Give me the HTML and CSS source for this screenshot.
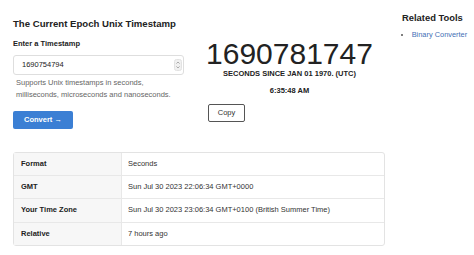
FILE: index.html
```html
<!DOCTYPE html>
<html>
<head>
    <title>Epoch Unix Timestamp</title>
    <link rel="stylesheet" href="styles.css">
</head>
<body>
    <div class="page">
        <div class="main">
            <div class="top">
                <div class="form">
                    <h1 class="title">The Current Epoch Unix Timestamp</h1>
                    <label class="label" for="ts">Enter a Timestamp</label>
                    <div class="field">
                        <input id="ts" class="field-input" type="text" value="1690754794">
                        <svg class="spinner" width="8" height="12" viewBox="0 0 8 12">
                            <rect x="0.5" y="0.5" width="7" height="11" rx="2" fill="#f0f0f0" stroke="#e2e2e2"/>
                            <path d="M2.4 4.6 L4 3 L5.6 4.6" fill="none" stroke="#999" stroke-width="0.8"/>
                            <path d="M2.4 7.4 L4 9 L5.6 7.4" fill="none" stroke="#999" stroke-width="0.8"/>
                        </svg>
                    </div>
                    <p class="help">Supports Unix timestamps in seconds,<br>milliseconds, microseconds and nanoseconds.</p>
                    <button class="btn-convert">Convert &rarr;</button>
                </div>
                <div class="display">
                    <div class="epoch">1690781747</div>
                    <div class="caption">SECONDS SINCE JAN 01 1970. (UTC)</div>
                    <div class="clock">6:35:48 AM</div>
                    <button class="btn-copy">Copy</button>
                </div>
            </div>
            <table class="results">
                <tr>
                    <td class="key">Format</td>
                    <td>Seconds</td>
                </tr>
                <tr>
                    <td class="key">GMT</td>
                    <td>Sun Jul 30 2023 22:06:34 GMT+0000</td>
                </tr>
                <tr>
                    <td class="key">Your Time Zone</td>
                    <td>Sun Jul 30 2023 23:06:34 GMT+0100 (British Summer Time)</td>
                </tr>
                <tr>
                    <td class="key">Relative</td>
                    <td>7 hours ago</td>
                </tr>
            </table>
        </div>
        <aside class="sidebar">
            <h2 class="sidebar-title">Related Tools</h2>
            <ul class="tools">
                <li><a href="#">Binary Converter</a></li>
            </ul>
        </aside>
    </div>
</body>
</html>
```

FILE: styles.css
```css
body {
    margin: 0;
    font-family: "Liberation Sans", Arial, sans-serif;
    color: #222;
}

.page {
    display: flex;
    padding-left: 13px;
}

.main {
    width: 372px;
}

.top {
    display: flex;
}

.form {
    width: 171px;
    padding-top: 18px;
}

.title {
    margin: 0;
    font-size: 9.6px;
    line-height: 12px;
    white-space: nowrap;
}

.label {
    display: block;
    margin-top: 8.5px;
    font-size: 7.5px;
    line-height: 10px;
    font-weight: bold;
}

.field {
    display: flex;
    align-items: center;
    height: 20px;
    box-sizing: border-box;
    margin-top: 6px;
    padding: 0 1px 0 8px;
    border: 1px solid #dedede;
    border-radius: 3px;
}

.field-input {
    flex: 1;
    min-width: 0;
    padding: 0;
    border: none;
    outline: none;
    background: transparent;
    font-family: "Liberation Sans", Arial, sans-serif;
    font-size: 7.5px;
    color: #222;
}

.help {
    margin: 2px 0 0;
    padding-left: 3px;
    font-size: 7.5px;
    line-height: 12.5px;
    color: #666;
    white-space: nowrap;
}

.btn-convert {
    display: block;
    margin-top: 9px;
    width: 60px;
    height: 18px;
    padding: 0;
    border: none;
    border-radius: 2px;
    background-color: #3b7fd4;
    color: white;
    font-family: "Liberation Sans", Arial, sans-serif;
    font-size: 7.5px;
    font-weight: bold;
}

.display {
    width: 167px;
    margin-left: 22px;
    padding-top: 39px;
    text-align: center;
}

.epoch {
    font-size: 30px;
    line-height: 30px;
}

.caption {
    font-size: 7.5px;
    line-height: 10px;
    font-weight: bold;
    white-space: nowrap;
}

.clock {
    margin-top: 6.5px;
    font-size: 7.5px;
    line-height: 10px;
    font-weight: bold;
}

.btn-copy {
    display: block;
    margin: 8px 0 0 2px;
    width: 37px;
    height: 18px;
    padding: 0;
    border: 1px solid #555;
    border-radius: 2px;
    background: white;
    color: #333;
    font-family: "Liberation Sans", Arial, sans-serif;
    font-size: 7.5px;
}

.results {
    width: 372px;
    margin-top: 23px;
    table-layout: fixed;
    border-collapse: separate;
    border-spacing: 0;
    border: 1px solid #e3e3e3;
    border-radius: 3px;
    font-size: 7.5px;
    color: #333;
}

.results td {
    padding: 7px 6px;
    line-height: 8.4px;
    border-bottom: 1px solid #e8e8e8;
    white-space: nowrap;
}

.results tr:last-child td {
    border-bottom: none;
}

.results .key {
    width: 93px;
    padding-left: 7px;
    padding-right: 7px;
    background-color: #f7f7f7;
    border-right: 1px solid #e8e8e8;
    font-weight: bold;
    color: #222;
}

.sidebar {
    margin-left: 17px;
    padding-top: 11.5px;
}

.sidebar-title {
    margin: 0;
    font-size: 9.4px;
    line-height: 12px;
    white-space: nowrap;
}

.tools {
    margin: 6px 0 0;
    padding-left: 9.7px;
    font-size: 7.4px;
    line-height: 10px;
}

.tools li::marker {
    color: #555;
}

.tools a {
    color: #3f6fb5;
    text-decoration: none;
    white-space: nowrap;
}
```
